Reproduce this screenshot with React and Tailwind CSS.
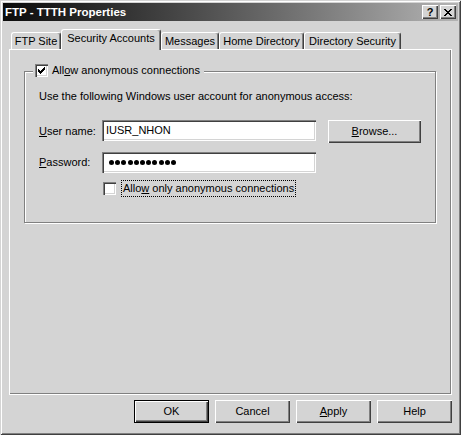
import React from 'react';

const raised =
  'shadow-[inset_1px_1px_0_#ffffff,inset_-1px_-1px_0_#404040,inset_-2px_-2px_0_#808080]';
const sunken =
  'shadow-[inset_1px_1px_0_#808080,inset_2px_2px_0_#404040,inset_-1px_-1px_0_#ffffff,inset_-2px_-2px_0_#d4d4d4]';

const Checkbox = ({ checked }) => (
  <div className={`w-[13px] h-[13px] bg-white shrink-0 flex items-center justify-center ${sunken}`}>
    {checked && (
      <svg width="7" height="7" viewBox="0 0 7 7" shapeRendering="crispEdges">
        <path d="M0 2h1v3H0zM1 3h1v3H1zM2 4h1v3H2zM3 3h1v3H3zM4 2h1v3H4zM5 1h1v3H5zM6 0h1v3H6z" fill="#000" />
      </svg>
    )}
  </div>
);

const Button = ({ children, wide, isDefault }) => (
  <div
    className={`h-[23px] flex items-center justify-center bg-[#d4d4d4] ${wide ? 'w-[93px]' : 'w-[75px]'} ${
      isDefault ? 'border border-black' : ''
    } ${raised}`}
  >
    <span>{children}</span>
  </div>
);

const tabs = [
  { name: 'FTP Site', w: 'w-[50px]' },
  { name: 'Security Accounts', w: 'w-[100px]', active: true },
  { name: 'Messages', w: 'w-[58px]' },
  { name: 'Home Directory', w: 'w-[85px]' },
  { name: 'Directory Security', w: 'w-[97px]' },
];

export default function App() {
  return (
    <div
      className={`w-[461px] h-[435px] bg-[#d4d4d4] p-[3px] flex flex-col text-[11px] text-black leading-[13px] shadow-[inset_1px_1px_0_#d4d4d4,inset_-1px_-1px_0_#404040,inset_2px_2px_0_#ffffff,inset_-2px_-2px_0_#808080]`}
      style={{ fontFamily: '"Liberation Sans", Arial, sans-serif' }}
    >
      {/* title bar */}
      <div className="h-[18px] flex items-center justify-between bg-gradient-to-r from-[#0c0c0c] via-[#5a5a5a] to-[#b4b4b4] pl-[2px] pr-[2px]">
        <span className="text-white font-bold text-[11.5px]">FTP - TTTH Properties</span>
        <div className="flex gap-[2px]">
          <div className={`w-[16px] h-[14px] bg-[#d4d4d4] flex items-center justify-center font-bold text-[11px] leading-none ${raised}`}>
            ?
          </div>
          <div className={`w-[16px] h-[14px] bg-[#d4d4d4] flex items-center justify-center ${raised}`}>
            <svg width="8" height="7" viewBox="0 0 8 7" shapeRendering="crispEdges">
              <path d="M0 0h2v1H0zM1 1h2v1H1zM2 2h4v1H2zM3 3h2v1H3zM2 4h4v1H2zM1 5h2v1H1zM0 6h2v1H0zM5 1h2v1H5zM6 0h2v1H6zM5 5h2v1H5zM6 6h2v1H6z" fill="#000" />
            </svg>
          </div>
        </div>
      </div>

      <div className="flex-1 flex flex-col px-[6px]">
        {/* tabs */}
        <div className="h-[20px] mt-[8px] pl-[2px] flex items-end relative z-10">
          {tabs.map((t) => (
            <div
              key={t.name}
              className={`${t.w} ${
                t.active ? 'h-[21px] -mb-px bg-[#d4d4d4] pb-[3px]' : 'h-[17px]'
              } flex items-center justify-center border-t border-l border-white border-r border-r-[#404040] rounded-t-[3px] shadow-[inset_-1px_0_0_#808080] whitespace-nowrap`}
            >
              {t.name}
            </div>
          ))}
        </div>

        {/* panel */}
        <div className="h-[346px] border-t border-l border-white border-r border-b border-[#404040] border-t-white border-l-white shadow-[inset_-1px_-1px_0_#808080] pt-[21px] pl-[14px] pr-[15px]">
          <div className="relative h-[152px] border border-[#808080] shadow-[1px_1px_0_#ffffff,inset_1px_1px_0_#ffffff] pt-[18px] pl-[14px]">
            <div className="absolute -top-[8px] left-[8px] bg-[#d4d4d4] px-[2px] flex items-center gap-[4px] pr-[4px]">
              <Checkbox checked />
              <span>
                All<span className="underline">o</span>w anonymous connections
              </span>
            </div>

            <div className="h-[14px]">Use the following Windows user account for anonymous access:</div>

            <div className="mt-[16px] flex items-center h-[23px]">
              <span className="w-[63px]">
                <span className="underline">U</span>ser name:
              </span>
              <div className={`w-[214px] h-[21px] self-start bg-white flex items-center px-[4px] ${sunken}`}>IUSR_NHON</div>
              <div className="ml-[12px]">
                <Button wide>
                  <span className="underline">B</span>rowse...
                </Button>
              </div>
            </div>

            <div className="mt-[9px] flex items-center h-[21px]">
              <span className="w-[63px]">
                <span className="underline">P</span>assword:
              </span>
              <div className={`w-[214px] h-[21px] bg-white flex items-center gap-[1.2px] px-[7px] ${sunken}`}>
                {Array.from({ length: 11 }).map((_, i) => (
                  <span key={i} className="w-[5px] h-[5px] rounded-full bg-black" />
                ))}
              </div>
            </div>

            <div className="mt-[7px] ml-[64px] flex items-center h-[17px]">
              <Checkbox />
              <div className="ml-[5px] h-[17px] flex items-center px-[1px] border border-dotted border-black">
                <span>
                  Allo<span className="underline">w</span> only anonymous connections
                </span>
              </div>
            </div>
          </div>
        </div>

        {/* buttons */}
        <div className="mt-[5px] flex justify-end gap-[6px]">
          <Button isDefault>OK</Button>
          <Button>Cancel</Button>
          <Button>
            <span className="underline">A</span>pply
          </Button>
          <Button>Help</Button>
        </div>
      </div>
    </div>
  );
}
